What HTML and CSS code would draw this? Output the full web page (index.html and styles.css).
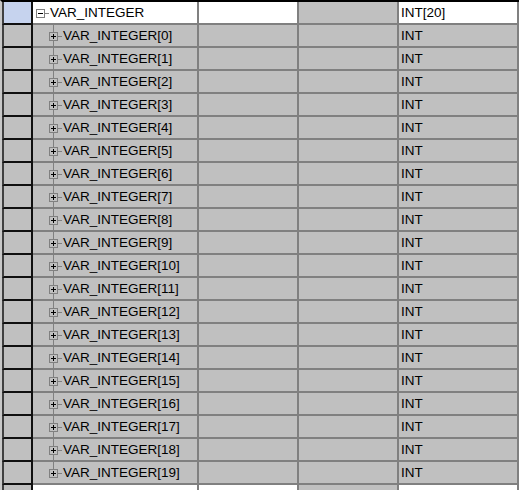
FILE: index.html
```html
<!DOCTYPE html>
<html>
<head>
<meta charset="utf-8">
<link rel="stylesheet" href="styles.css">
</head>
<body>
<div class="grid">
  <div class="row root">
    <div class="rh sel"></div>
    <div class="c1"><span class="box minus"></span><span class="dash"></span><span class="name">VAR_INTEGER</span></div>
    <div class="c2"></div>
    <div class="c3"></div>
    <div class="c4">INT[20]</div>
  </div>
  <div class="row child"><div class="rh"></div><div class="c1"><span class="box plus"></span><span class="dash"></span><span class="name">VAR_INTEGER[0]</span></div><div class="c2"></div><div class="c3"></div><div class="c4">INT</div></div>
  <div class="row child"><div class="rh"></div><div class="c1"><span class="box plus"></span><span class="dash"></span><span class="name">VAR_INTEGER[1]</span></div><div class="c2"></div><div class="c3"></div><div class="c4">INT</div></div>
  <div class="row child"><div class="rh"></div><div class="c1"><span class="box plus"></span><span class="dash"></span><span class="name">VAR_INTEGER[2]</span></div><div class="c2"></div><div class="c3"></div><div class="c4">INT</div></div>
  <div class="row child"><div class="rh"></div><div class="c1"><span class="box plus"></span><span class="dash"></span><span class="name">VAR_INTEGER[3]</span></div><div class="c2"></div><div class="c3"></div><div class="c4">INT</div></div>
  <div class="row child"><div class="rh"></div><div class="c1"><span class="box plus"></span><span class="dash"></span><span class="name">VAR_INTEGER[4]</span></div><div class="c2"></div><div class="c3"></div><div class="c4">INT</div></div>
  <div class="row child"><div class="rh"></div><div class="c1"><span class="box plus"></span><span class="dash"></span><span class="name">VAR_INTEGER[5]</span></div><div class="c2"></div><div class="c3"></div><div class="c4">INT</div></div>
  <div class="row child"><div class="rh"></div><div class="c1"><span class="box plus"></span><span class="dash"></span><span class="name">VAR_INTEGER[6]</span></div><div class="c2"></div><div class="c3"></div><div class="c4">INT</div></div>
  <div class="row child"><div class="rh"></div><div class="c1"><span class="box plus"></span><span class="dash"></span><span class="name">VAR_INTEGER[7]</span></div><div class="c2"></div><div class="c3"></div><div class="c4">INT</div></div>
  <div class="row child"><div class="rh"></div><div class="c1"><span class="box plus"></span><span class="dash"></span><span class="name">VAR_INTEGER[8]</span></div><div class="c2"></div><div class="c3"></div><div class="c4">INT</div></div>
  <div class="row child"><div class="rh"></div><div class="c1"><span class="box plus"></span><span class="dash"></span><span class="name">VAR_INTEGER[9]</span></div><div class="c2"></div><div class="c3"></div><div class="c4">INT</div></div>
  <div class="row child"><div class="rh"></div><div class="c1"><span class="box plus"></span><span class="dash"></span><span class="name">VAR_INTEGER[10]</span></div><div class="c2"></div><div class="c3"></div><div class="c4">INT</div></div>
  <div class="row child"><div class="rh"></div><div class="c1"><span class="box plus"></span><span class="dash"></span><span class="name">VAR_INTEGER[11]</span></div><div class="c2"></div><div class="c3"></div><div class="c4">INT</div></div>
  <div class="row child"><div class="rh"></div><div class="c1"><span class="box plus"></span><span class="dash"></span><span class="name">VAR_INTEGER[12]</span></div><div class="c2"></div><div class="c3"></div><div class="c4">INT</div></div>
  <div class="row child"><div class="rh"></div><div class="c1"><span class="box plus"></span><span class="dash"></span><span class="name">VAR_INTEGER[13]</span></div><div class="c2"></div><div class="c3"></div><div class="c4">INT</div></div>
  <div class="row child"><div class="rh"></div><div class="c1"><span class="box plus"></span><span class="dash"></span><span class="name">VAR_INTEGER[14]</span></div><div class="c2"></div><div class="c3"></div><div class="c4">INT</div></div>
  <div class="row child"><div class="rh"></div><div class="c1"><span class="box plus"></span><span class="dash"></span><span class="name">VAR_INTEGER[15]</span></div><div class="c2"></div><div class="c3"></div><div class="c4">INT</div></div>
  <div class="row child"><div class="rh"></div><div class="c1"><span class="box plus"></span><span class="dash"></span><span class="name">VAR_INTEGER[16]</span></div><div class="c2"></div><div class="c3"></div><div class="c4">INT</div></div>
  <div class="row child"><div class="rh"></div><div class="c1"><span class="box plus"></span><span class="dash"></span><span class="name">VAR_INTEGER[17]</span></div><div class="c2"></div><div class="c3"></div><div class="c4">INT</div></div>
  <div class="row child"><div class="rh"></div><div class="c1"><span class="box plus"></span><span class="dash"></span><span class="name">VAR_INTEGER[18]</span></div><div class="c2"></div><div class="c3"></div><div class="c4">INT</div></div>
  <div class="row child last"><div class="rh"></div><div class="c1"><span class="box plus"></span><span class="dash"></span><span class="name">VAR_INTEGER[19]</span></div><div class="c2"></div><div class="c3"></div><div class="c4">INT</div></div>
  <div class="row root"><div class="rh"></div><div class="c1"></div><div class="c2"></div><div class="c3"></div><div class="c4"></div></div>
</div>
</body>
</html>
```

FILE: styles.css
```css
html, body {
  margin: 0;
  padding: 0;
  background: #fff;
  overflow: hidden;
}

body {
  font-family: "Liberation Sans", Arial, sans-serif;
  font-size: 13.5px;
  color: #000;
}

.grid {
  width: 519px;
  border-top: 2px solid #000;
  border-left: 2px solid #c8c8c8;
  box-sizing: border-box;
}

.row {
  display: flex;
  height: 23px;
}

.row > div {
  box-sizing: border-box;
  height: 23px;
  border-bottom: 2px solid #808080;
  background: #c0c0c0;
}

.rh {
  width: 31px;
  border-left: 2px solid #404040;
  border-right: 2px solid #101010;
  border-bottom-color: #101010 !important;
}

.row > .rh.sel {
  background: #c6d3ee;
}

.c1 {
  width: 166px;
  border-right: 2px solid #808080;
  display: flex;
  align-items: center;
  position: relative;
  white-space: nowrap;
  overflow: visible;
}

.c2 {
  width: 100px;
  border-right: 2px solid #808080;
}

.c3 {
  width: 100px;
  border-right: 2px solid #808080;
}

.c4 {
  width: 120px;
  border-right: 2px solid #808080;
  padding-left: 2px;
  line-height: 21px;
  white-space: nowrap;
}

.root > .c1,
.root > .c2,
.root > .c4 {
  background: #fff;
}

.root > .c1 {
  padding-left: 3px;
}

.child > .c1 {
  padding-left: 16px;
}

.child > .c1::before {
  content: "";
  position: absolute;
  left: 20px;
  top: -2px;
  bottom: -2px;
  width: 1px;
  background: #808080;
}

.child.last > .c1::before {
  bottom: 50%;
}

.box {
  position: relative;
  z-index: 1;
  display: inline-block;
  width: 9px;
  height: 9px;
  box-sizing: border-box;
  border: 1px solid #808080;
  background: #c0c0c0;
  margin-top: 1px;
  flex: none;
}

.root .box {
  background: #fff;
}

.box::before {
  content: "";
  position: absolute;
  left: 1px;
  top: 3px;
  width: 5px;
  height: 1px;
  background: #000;
}

.box.plus::after {
  content: "";
  position: absolute;
  left: 3px;
  top: 1px;
  width: 1px;
  height: 5px;
  background: #000;
}

.dash {
  display: inline-block;
  width: 4px;
  height: 1px;
  background: #808080;
  margin-top: 1px;
  flex: none;
}

.name {
  padding-left: 1px;
  line-height: 21px;
}
```
